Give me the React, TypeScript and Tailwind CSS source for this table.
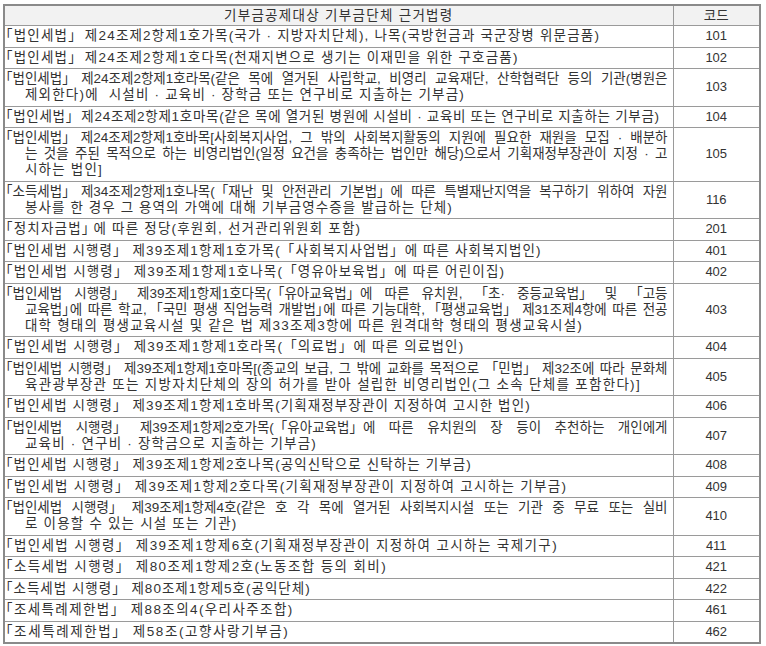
type Row = {
  code: string;
  lines: string[];
  track: string;
};

// "{" = leading bracket pulled left, "}" = closing bracket trimmed hard,
// "»" = closing bracket trimmed a little, "‹" = opening bracket trimmed a little
const rows: Row[] = [
  { code: "101", track: "tracking-[1.2px]", lines: ["{법인세법» 제24조제2항제1호가목(국가 · 지방자치단체), 나목(국방헌금과 국군장병 위문금품)"] },
  { code: "102", track: "tracking-[1.2px]", lines: ["{법인세법» 제24조제2항제1호다목(천재지변으로 생기는 이재민을 위한 구호금품)"] },
  {
    code: "103",
    track: "tracking-[1.2px]",
    lines: [
      "{법인세법» 제24조제2항제1호라목(같은 목에 열거된 사립학교, 비영리 교육재단, 산학협력단 등의 기관(병원은",
      "제외한다)에\u00a0 시설비 · 교육비 · 장학금 또는 연구비로 지출하는 기부금)",
    ],
  },
  { code: "104", track: "tracking-[0.7px]", lines: ["{법인세법» 제24조제2항제1호마목(같은 목에 열거된 병원에 시설비 · 교육비 또는 연구비로 지출하는 기부금)"] },
  {
    code: "105",
    track: "tracking-[1.2px]",
    lines: [
      "{법인세법» 제24조제2항제1호바목[사회복지사업, 그 밖의 사회복지활동의 지원에 필요한 재원을 모집 · 배분하",
      "는 것을 주된 목적으로 하는 비영리법인(일정 요건을 충족하는 법인만 해당)으로서 기획재정부장관이 지정 · 고",
      "시하는 법인]",
    ],
  },
  {
    code: "116",
    track: "tracking-[1.1px]",
    lines: [
      "{소득세법» 제34조제2항제1호나목(「재난 및 안전관리 기본법」에 따른 특별재난지역을 복구하기 위하여 자원",
      "봉사를 한 경우 그 용역의 가액에 대해 기부금영수증을 발급하는 단체)",
    ],
  },
  { code: "201", track: "tracking-[1.2px]", lines: ["{정치자금법»에 따른 정당(후원회, 선거관리위원회 포함)"] },
  { code: "401", track: "tracking-[1.1px]", lines: ["{법인세법 시행령」 제39조제1항제1호가목(「사회복지사업법」에 따른 사회복지법인)"] },
  { code: "402", track: "tracking-[1.2px]", lines: ["{법인세법 시행령」 제39조제1항제1호나목(「영유아보육법」에 따른 어린이집)"] },
  {
    code: "403",
    track: "tracking-[1.2px]",
    lines: [
      "{법인세법 시행령」 제39조제1항제1호다목(「유아교육법」에 따른 유치원, 「초· 중등교육법」 및 「고등",
      "교육법}에 따른 학교, ‹국민 평생 직업능력 개발법}에 따른 기능대학, ‹평생교육법」 제31조제4항에 따른 전공",
      "대학 형태의 평생교육시설 및 같은 법 제33조제3항에 따른 원격대학 형태의 평생교육시설)",
    ],
  },
  { code: "404", track: "tracking-[1.2px]", lines: ["{법인세법 시행령」 제39조제1항제1호라목(「의료법」에 따른 의료법인)"] },
  {
    code: "405",
    track: "tracking-[1.3px]",
    lines: [
      "{법인세법 시행령」 제39조제1항제1호마목[(종교의 보급, 그 밖에 교화를 목적으로 「민법」 제32조에 따라 문화체",
      "육관광부장관 또는 지방자치단체의 장의 허가를 받아 설립한 비영리법인(그 소속 단체를 포함한다)]",
    ],
  },
  { code: "406", track: "tracking-[1.1px]", lines: ["{법인세법 시행령」 제39조제1항제1호바목(기획재정부장관이 지정하여 고시한 법인)"] },
  {
    code: "407",
    track: "tracking-[1.2px]",
    lines: [
      "{법인세법 시행령」 제39조제1항제2호가목(「유아교육법」에 따른 유치원의 장 등이 추천하는 개인에게",
      "교육비 · 연구비 · 장학금으로 지출하는 기부금)",
    ],
  },
  { code: "408", track: "tracking-[1.1px]", lines: ["{법인세법 시행령」 제39조제1항제2호나목(공익신탁으로 신탁하는 기부금)"] },
  { code: "409", track: "tracking-[1.3px]", lines: ["{법인세법 시행령」 제39조제1항제2호다목(기획재정부장관이 지정하여 고시하는 기부금)"] },
  {
    code: "410",
    track: "tracking-[1.2px]",
    lines: [
      "{법인세법 시행령」 제39조제1항제4호(같은 호 각 목에 열거된 사회복지시설 또는 기관 중 무료 또는 실비",
      "로 이용할 수 있는 시설 또는 기관)",
    ],
  },
  { code: "411", track: "tracking-[1.4px]", lines: ["{법인세법 시행령」 제39조제1항제6호(기획재정부장관이 지정하여 고시하는 국제기구)"] },
  { code: "421", track: "tracking-[1.4px]", lines: ["{소득세법 시행령」 제80조제1항제2호(노동조합 등의 회비)"] },
  { code: "422", track: "tracking-[1px]", lines: ["{소득세법 시행령」 제80조제1항제5호(공익단체)"] },
  { code: "461", track: "tracking-[1.4px]", lines: ["{조세특례제한법」 제88조의4(우리사주조합)"] },
  { code: "462", track: "tracking-[1.6px]", lines: ["{조세특례제한법」 제58조(고향사랑기부금)"] },
];

// brackets are inline-block so justified lines stretch only at word gaps
function LawText({ text }: { text: string }) {
  const parts = text.split(/([{}»‹「」])/);
  return (
    <>
      {parts.map((p, i) => {
        if (p === "{") return <span key={i} className="inline-block -ml-[6px]">「</span>;
        if (p === "‹") return <span key={i} className="inline-block -ml-[3px]">「</span>;
        if (p === "}") return <span key={i} className="inline-block -mr-[6px]">」</span>;
        if (p === "»") return <span key={i} className="inline-block -mr-[3px]">」</span>;
        if (p === "「") return <span key={i} className="inline-block">「</span>;
        if (p === "」") return <span key={i} className="inline-block">」</span>;
        return p;
      })}
    </>
  );
}

export default function App() {
  return (
    <div className="min-h-screen bg-white pt-[4px] pl-[3px] font-['Liberation_Sans','Noto_Sans_CJK_KR',sans-serif] text-[13.5px] leading-[16px] text-[#333]">
      <table className="table-fixed border-collapse border-2 border-[#8a8a8a] w-[758px]">
        <colgroup>
          <col className="w-[669px]" />
          <col />
        </colgroup>
        <thead>
          <tr className="bg-[#f2f2f2]">
            <th className="border border-[#9a9a9a] py-[1.5px] font-normal text-center tracking-[1.3px]">
              기부금공제대상 기부금단체 근거법령
            </th>
            <th className="border border-[#9a9a9a] py-[1.5px] font-normal text-center">코드</th>
          </tr>
        </thead>
        <tbody>
          {rows.map((row) => (
            <tr key={row.code}>
              <td className="border border-[#9a9a9a] py-[2.25px] pl-0 pr-[5px] text-left align-middle">
                {row.lines.map((line, i) => {
                  const last = i === row.lines.length - 1;
                  return (
                    <div
                      key={i}
                      className={`whitespace-nowrap ${i > 0 ? "pl-[20px]" : ""} ${
                        last ? row.track : "tracking-normal text-justify [text-align-last:justify]"
                      }`}
                    >
                      <LawText text={line} />
                    </div>
                  );
                })}
              </td>
              <td className="border border-[#9a9a9a] py-[2.25px] text-center align-middle text-[13px]">
                {row.code}
              </td>
            </tr>
          ))}
        </tbody>
      </table>
    </div>
  );
}
